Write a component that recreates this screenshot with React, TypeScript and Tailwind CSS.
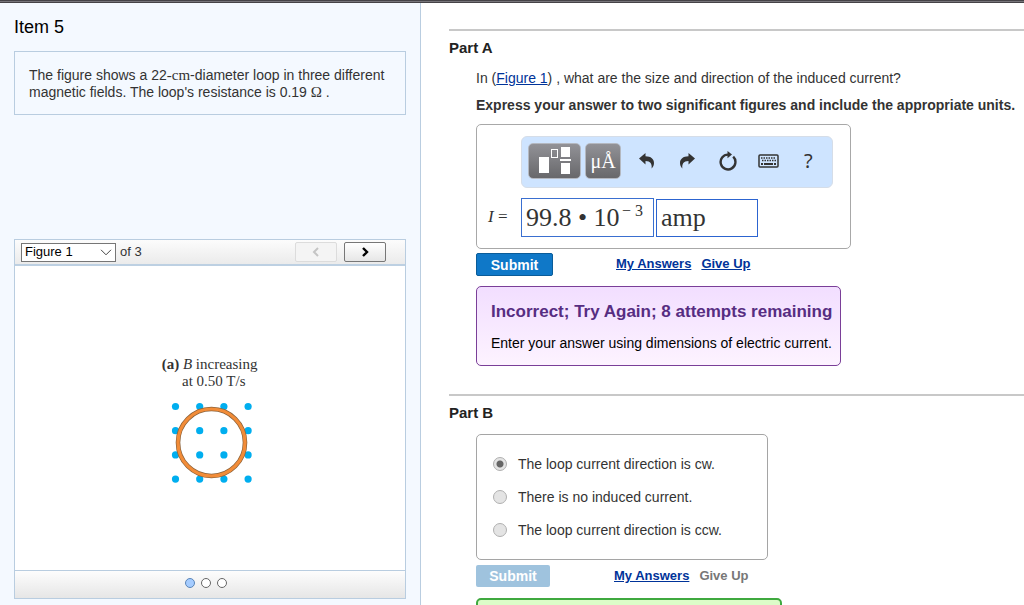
import { useState } from "react";

const choices = [
  "The loop current direction is cw.",
  "There is no induced current.",
  "The loop current direction is ccw.",
];

const figures = ["Figure 1", "Figure 2", "Figure 3"];

const grid = [0, 1, 2, 3];

const SERIF = "font-['Liberation_Serif',serif]";

function LoopFigure() {
  return (
    <figure className="flex flex-col items-center">
      <figcaption className="mr-1 w-24 text-right font-['Liberation_Serif',serif] text-[15px] leading-[17px] whitespace-nowrap text-[#333]">
        <b>(a)</b> <i>B</i> increasing
        <br />
        <span className="pr-3">at 0.50 T/s</span>
      </figcaption>
      <svg width="82" height="82" viewBox="0 0 82 82" className="mt-3" aria-label="Loop in field">
        {grid.map((row) =>
          grid.map((col) => (
            <circle key={`${row}-${col}`} cx={4.5 + col * 24.2} cy={4.5 + row * 24.2} r="3.6" fill="#00aeef" />
          ))
        )}
        <circle cx="40.5" cy="40.5" r="33.5" fill="none" stroke="#8c6239" strokeWidth="4.6" />
        <circle cx="40.5" cy="40.5" r="33.5" fill="none" stroke="#f28c38" strokeWidth="3.2" />
      </svg>
    </figure>
  );
}

function FigurePanel() {
  const [figure, setFigure] = useState(0);

  return (
    <section className="mt-[124px] flex flex-1 flex-col border border-[#b9cde0] bg-white">
      <div className="flex h-[26px] items-center border-b-2 border-[#bdd0e2] bg-linear-to-b from-[#fcfcfc] to-[#ebebeb] pr-[19px] pl-1.5 text-[13px] text-[#333]">
        <div className="relative">
          <select
            aria-label="Figure"
            value={figure}
            onChange={(e) => setFigure(Number(e.target.value))}
            className="block h-[19px] w-[95px] appearance-none border border-[#767676] bg-white pl-[3px] text-[13px] leading-4 text-black"
          >
            {figures.map((name, index) => (
              <option key={name} value={index}>
                {name}
              </option>
            ))}
          </select>
          <svg width="12" height="7" viewBox="0 0 12 7" className="pointer-events-none absolute top-1.5 right-1" fill="none" stroke="#444">
            <path d="M1 .8 6 5.8 11 .8" />
          </svg>
        </div>
        <span className="ml-1">of 3</span>
        <button
          type="button"
          aria-label="Previous figure"
          disabled
          className="ml-auto flex h-5 w-[42px] items-center justify-center rounded-xs border border-[#dcdcdc] bg-[#f4f4f4] text-[#c4c4c4]"
        >
          <svg width="8" height="10" viewBox="0 0 8 10" fill="none" stroke="currentColor" strokeWidth="2">
            <path d="M6 1 2 5l4 4" />
          </svg>
        </button>
        <button
          type="button"
          aria-label="Next figure"
          className="ml-[7px] flex h-5 w-[42px] items-center justify-center rounded-xs border border-[#777] bg-linear-to-b from-white to-[#e6e6e6] text-black"
        >
          <svg width="8" height="10" viewBox="0 0 8 10" fill="none" stroke="currentColor" strokeWidth="2.4">
            <path d="M2 1l4 4-4 4" />
          </svg>
        </button>
      </div>
      <div className="flex flex-1 justify-center pt-[90px] pl-[3px]">
        <LoopFigure />
      </div>
      <div className="flex h-7 items-center justify-center gap-1.5 border-t border-[#b9cde0] bg-linear-to-b from-[#fdfdfd] to-[#e6e6e6] pr-2 pb-1">
        {figures.map((name, index) => (
          <button
            key={name}
            type="button"
            aria-label={name}
            onClick={() => setFigure(index)}
            className={`h-2.5 w-2.5 rounded-full border ${
              index === figure ? "border-[#5b86b8] bg-[#a5ccff]" : "border-[#666] bg-white"
            }`}
          />
        ))}
      </div>
    </section>
  );
}

function Toolbar() {
  return (
    <div className="ml-[33px] flex h-[52px] w-[312px] items-center rounded-md border border-[#d5dde8] bg-[#cee4ff] pb-[3px] pl-1.5 text-[#333]">
      <button
        type="button"
        aria-label="Templates"
        className="flex h-9 w-[53px] items-center justify-center rounded-[5px] border border-[#b4b8c0] bg-linear-to-b from-[#929297] to-[#68686b]"
      >
        <svg width="34" height="28" viewBox="0 0 34 28" fill="white">
          <path d="M1 10h10v16H1zM23 0h9v10h-9zM22 12h11v2H22zM23 16h9v11h-9z" />
          <rect x="13.500" y="2.500" width="6" height="8" fill="none" stroke="white" />
        </svg>
      </button>
      <button
        type="button"
        aria-label="Symbols"
        className="ml-1 flex h-9 w-9 items-center justify-center rounded-[5px] border border-[#b4b8c0] bg-linear-to-b from-[#929297] to-[#68686b] font-['Liberation_Serif',serif] text-xl leading-none text-white"
      >
        μÅ
      </button>
      <button type="button" aria-label="Undo" className="ml-[18px]">
        <svg width="16" height="16" viewBox="0 0 16 16" fill="currentColor">
          <path d="M0 5.600 6.500 0v3.200C12 3.200 15 6 15 10c0 2.200-.8 4-2.400 5.600C13.200 11 11.500 8.200 6.500 8.100v3.300z" />
        </svg>
      </button>
      <button type="button" aria-label="Redo" className="ml-6">
        <svg width="16" height="16" viewBox="0 0 16 16" fill="currentColor">
          <path d="M16 5.600 9.500 0v3.200C4 3.200 1 6 1 10c0 2.200.8 4 2.400 5.600C2.800 11 4.500 8.200 9.500 8.100v3.300z" />
        </svg>
      </button>
      <button type="button" aria-label="Reset" className="ml-6">
        <svg width="18" height="20" viewBox="0 0 18 20" fill="none" stroke="currentColor" strokeWidth="2.4">
          <path d="M14.2 5.700A7.400 7.400 0 1 1 9 3.600" />
          <path d="M8.500 0v7.200L13 3.600z" fill="currentColor" stroke="none" />
        </svg>
      </button>
      <button type="button" aria-label="Keyboard" className="ml-[21px]">
        <svg width="21" height="14" viewBox="0 0 21 14" fill="none" stroke="currentColor">
          <rect x="1" y="1" width="19" height="12" rx="1" strokeWidth="1.500" />
          <path d="M3 4h15M4 6.500h14" strokeWidth="1.500" strokeDasharray="1.500 1" />
          <path d="M3 10h2M6 10h9M16 10h2" strokeWidth="1.800" />
        </svg>
      </button>
      <button type="button" aria-label="Help" className="ml-[25px] font-['Noto_Sans',sans-serif] text-xl leading-none">
        ?
      </button>
    </div>
  );
}

function AnswerEditor() {
  return (
    <div className="w-[375px] rounded-[5px] border border-[#a8a8a8] bg-white pt-[11px] pr-3 pb-[11px] pl-[11px]">
      <Toolbar />
      <div className="mt-2.5 flex h-[39px] items-stretch">
        <label htmlFor="value" className={`${SERIF} w-[33px] self-center text-[17px]`}>
          <i>I</i> =
        </label>
        <div className="flex w-[133px] border border-[#3a6fd0] pl-1">
          <input
            id="value"
            defaultValue="99.8 • 10"
            className="w-[96px] bg-transparent font-['Liberation_Serif',serif] text-[26px] outline-none"
          />
          <input
            aria-label="Exponent"
            defaultValue="− 3"
            className="h-6 w-[26px] bg-transparent font-['Liberation_Serif',serif] text-base outline-none"
          />
        </div>
        <input
          aria-label="Units"
          defaultValue="amp"
          className="mt-px ml-0.5 w-[102px] border border-[#2c64d0] px-1 font-['Liberation_Serif',serif] text-[26px] outline-none"
        />
      </div>
    </div>
  );
}

export default function App() {
  const [choice, setChoice] = useState(0);

  return (
    <div className="flex h-screen flex-col overflow-hidden bg-white font-['Liberation_Sans',Arial,sans-serif] text-sm text-[#333]">
      <div className="h-[3px] shrink-0 border-y border-[#454347] bg-[#77757a]" />
      <div className="flex min-h-0 flex-1">
        <aside className="flex w-[421px] shrink-0 flex-col border-r border-[#b9cde0] bg-[#f4f9ff] pt-3 pr-3.5 pb-1.5 pl-3.5">
          <h1 className="text-lg leading-6 text-black">Item 5</h1>
          <p className="mt-3 border border-[#b9cde0] px-3.5 pt-[15px] pb-[13px] leading-[17px]">
            The figure shows a 22<span className="font-['Liberation_Serif',serif] text-[15px] leading-none">-cm</span>
            -diameter loop in three different magnetic fields. The loop's resistance is 0.19{" "}
            <span className="font-['Liberation_Serif',serif] text-[15px] leading-none">Ω</span> .
          </p>
          <FigurePanel />
        </aside>

        <main className="min-w-0 flex-1 overflow-hidden pt-[26px] pl-7">
          <section className="border-t-2 border-[#c8c8c8]">
            <h2 className="mt-[7px] text-[15px] leading-5 font-bold text-[#222]">Part A</h2>
            <div className="pl-[27px]">
              <p className="mt-2.5 leading-5">
                In (
                <a href="#figure" className="text-[#003399] underline">
                  Figure 1
                </a>
                ) , what are the size and direction of the induced current?
              </p>
              <p className="mt-[7px] mb-[9px] leading-5 font-bold">
                Express your answer to two significant figures and include the appropriate units.
              </p>
              <AnswerEditor />
              <div className="mt-1 flex items-center text-[13px] font-bold">
                <button type="button" className="h-[23px] w-[77px] rounded-xs border border-[#0a5c99] bg-[#0f78c8] text-sm leading-5 text-white">
                  Submit
                </button>
                <a href="#answers" className="ml-[63px] text-[#003399] underline">
                  My Answers
                </a>
                <a href="#give-up" className="ml-2.5 text-[#003399] underline">
                  Give Up
                </a>
              </div>
              <div className="mt-2.5 w-[365px] rounded-[5px] border border-[#7a3f98] bg-linear-to-b from-[#f2deff] to-[#fdf3ff] px-3.5 pt-[15px] pb-3">
                <h3 className="text-[17px] leading-5 font-bold whitespace-nowrap text-[#572d82]">
                  Incorrect; Try Again; 8 attempts remaining
                </h3>
                <p className="mt-[11px] leading-5 whitespace-nowrap text-black">
                  Enter your answer using dimensions of electric current.
                </p>
              </div>
            </div>
          </section>

          <section className="mt-7 border-t-2 border-[#c8c8c8]">
            <h2 className="mt-[7px] text-[15px] leading-5 font-bold text-[#222]">Part B</h2>
            <div className="pl-[27px]">
              <fieldset className="mt-[11px] flex w-[292px] flex-col gap-[13px] rounded-[5px] border border-[#a5a5a5] py-[19px] pl-4">
                {choices.map((label, index) => (
                  <label key={label} className="flex items-center leading-5">
                    <input
                      type="radio"
                      name="direction"
                      checked={choice === index}
                      onChange={() => setChoice(index)}
                      className="mr-[11px] h-3.5 w-3.5 appearance-none rounded-full border border-[#b0b0b0] bg-[#e4e4e4] checked:bg-[radial-gradient(circle,#666_0_3px,#e4e4e4_4px)]"
                    />
                    {label}
                  </label>
                ))}
              </fieldset>
              <div className="mt-[5px] flex items-center text-[13px] font-bold">
                <button type="button" disabled className="h-[22px] w-[74px] rounded-xs bg-[#9fc3de] text-sm leading-5 text-white">
                  Submit
                </button>
                <a href="#answers" className="ml-16 text-[#003399] underline">
                  My Answers
                </a>
                <span className="ml-2.5 text-[#777]">Give Up</span>
              </div>
              <div className="mt-[11px] h-20 w-[306px] rounded-[5px] border-2 border-[#3fa93f] bg-[#dcfcc8]" />
            </div>
          </section>
        </main>
      </div>
    </div>
  );
}
